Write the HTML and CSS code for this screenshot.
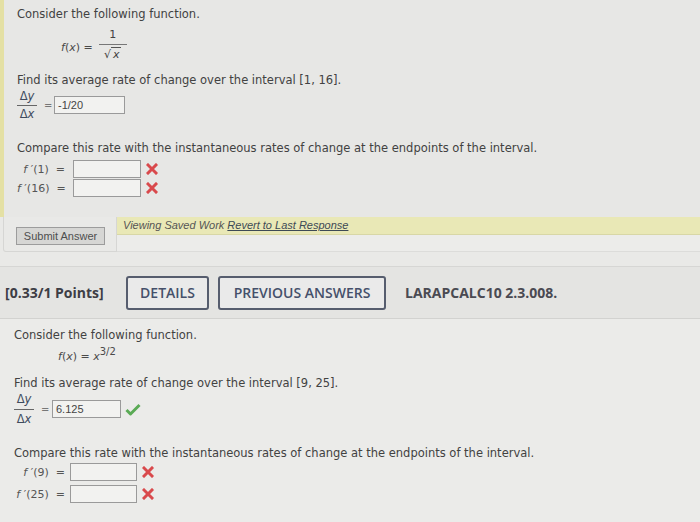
FILE: index.html
```html
<!DOCTYPE html>
<html>
<head>
<meta charset="utf-8">
<link rel="stylesheet" href="styles.css">
</head>
<body>
<div class="page">
  <section class="q1">
    <p class="txt t1">Consider the following function.</p>
    <div class="formula f1">
      <span class="fx"><i>f</i>(<i>x</i>) =</span>
      <span class="frac">
        <span class="num">1</span>
        <span class="bar"></span>
        <span class="den">√<span class="rad"><i>x</i></span></span>
      </span>
    </div>
    <p class="txt t2">Find its average rate of change over the interval [1, 16].</p>
    <div class="drow d1">
      <span class="dfrac"><span class="dn">Δ<i>y</i></span><span class="dbar"></span><span class="dd">Δ<i>x</i></span></span>
      <span class="eq">=</span>
      <span class="box filled">-1/20</span>
    </div>
    <p class="txt t3">Compare this rate with the instantaneous rates of change at the endpoints of the interval.</p>
    <div class="arow r1">
      <span class="lab"><i>f</i> ′(1) &nbsp;=</span>
      <span class="box wide"></span>
      <svg class="xm" width="12" height="12" viewBox="0 0 12 12"><path d="M2 2 L10 10 M10 2 L2 10" stroke="#d9494c" stroke-width="3" stroke-linecap="square"/></svg>
    </div>
    <div class="arow r2">
      <span class="lab"><i>f</i> ′(16) &nbsp;=</span>
      <span class="box wide"></span>
      <svg class="xm" width="12" height="12" viewBox="0 0 12 12"><path d="M2 2 L10 10 M10 2 L2 10" stroke="#d9494c" stroke-width="3" stroke-linecap="square"/></svg>
    </div>
  </section>
  <div class="submitrow">
    <div class="submitcell"><span class="submit">Submit Answer</span></div>
    <div class="savedcell">
      <div class="saved"><i>Viewing Saved Work</i> <a class="revert">Revert to Last Response</a></div>
    </div>
  </div>
  <header class="qhead">
    <span class="points">[0.33/1 Points]</span>
    <span class="btn details">DETAILS</span>
    <span class="btn prev">PREVIOUS ANSWERS</span>
    <span class="code">LARAPCALC10 2.3.008.</span>
  </header>
  <section class="q2">
    <p class="txt u1">Consider the following function.</p>
    <div class="formula f2"><span class="fx"><i>f</i>(<i>x</i>) = <i>x</i><sup>3/2</sup></span></div>
    <p class="txt u2">Find its average rate of change over the interval [9, 25].</p>
    <div class="drow d2">
      <span class="dfrac"><span class="dn">Δ<i>y</i></span><span class="dbar"></span><span class="dd">Δ<i>x</i></span></span>
      <span class="eq">=</span>
      <span class="box filled">6.125</span>
      <svg class="ck" width="16" height="13" viewBox="0 0 16 13"><path d="M1.5 7 L5.5 11 L14.5 2" fill="none" stroke="#5aaa55" stroke-width="3" stroke-linejoin="round"/></svg>
    </div>
    <p class="txt u3">Compare this rate with the instantaneous rates of change at the endpoints of the interval.</p>
    <div class="arow s1">
      <span class="lab"><i>f</i> ′(9) &nbsp;=</span>
      <span class="box wide2"></span>
      <svg class="xm" width="12" height="12" viewBox="0 0 12 12"><path d="M2 2 L10 10 M10 2 L2 10" stroke="#d9494c" stroke-width="3" stroke-linecap="square"/></svg>
    </div>
    <div class="arow s2">
      <span class="lab"><i>f</i> ′(25) &nbsp;=</span>
      <span class="box wide2"></span>
      <svg class="xm" width="12" height="12" viewBox="0 0 12 12"><path d="M2 2 L10 10 M10 2 L2 10" stroke="#d9494c" stroke-width="3" stroke-linecap="square"/></svg>
    </div>
  </section>
</div>
</body>
</html>
```
FILE: styles.css
```css
* { box-sizing: border-box; }
html, body { margin: 0; padding: 0; }
body {
  width: 700px;
  height: 522px;
  overflow: hidden;
  background: #e9e9e7;
  font-family: "DejaVu Sans", Verdana, sans-serif;
  color: #424242;
}
.page { width: 700px; height: 522px; display: flex; flex-direction: column; }

.txt { margin: 0; font-size: 11.5px; line-height: 14px; white-space: nowrap; }

.q1 {
  height: 217px;
  border-left: 4px solid #e4e0a4;
  padding: 7px 0 0 13px;
  background: #e7e7e5;
}
.q1 .t2 { margin-top: 11px; }
.q1 .t3 { margin-top: 20px; }

.formula { display: flex; align-items: center; font-size: 11px; }
.f1 { margin-top: 7px; padding-left: 44px; height: 34px; }
.fx { margin-right: 6px; padding-top: 4px; color: #4a4a4a; }
.fx sup { font-size: 10px; vertical-align: 5px; line-height: 0; }
.frac { display: flex; flex-direction: column; align-items: center; width: 28px; }
.num { line-height: 14px; }
.bar { width: 28px; height: 1px; background: #777; margin: 2px 0 3px; }
.den { line-height: 14px; }
.rad { border-top: 1px solid #555; padding: 0 2px; }

.drow { display: flex; align-items: center; font-size: 11.5px; }
.d1 { margin-top: 2px; }
.dfrac { display: flex; flex-direction: column; align-items: center; width: 20px; color: #3e4b5e; }
.dn, .dd { line-height: 14px; }
.dbar { width: 20px; height: 1px; background: #666; margin: 2px 0 1px; }
.eq { margin: 0 0 0 7px; width: 7px; font-size: 10px; color: #777; }
.box {
  display: inline-block;
  height: 18px;
  border: 1px solid #9a9a9a;
  background: #f2f2f0;
  font-family: "Liberation Sans", Arial, sans-serif;
  font-size: 11px;
  line-height: 16px;
  padding-left: 3px;
  color: #444;
}
.filled { width: 71px; margin-left: 3px; }
.wide { width: 68px; }
.wide2 { width: 67px; }

.arow { display: flex; align-items: center; font-size: 11px; height: 18px; }
.lab { width: 48px; text-align: right; white-space: nowrap; color: #555; }
.r1 { margin-top: 5px; }
.r2 { margin-top: 1px; }
.r1 .box, .r2 .box { margin-left: 8px; }
.xm { margin-left: 5px; }

.submitrow { display: flex; height: 35px; }
.submitcell {
  width: 114px;
  padding: 8px 0 0 12px;
  margin-left: 3px;
  border-left: 1px solid #d6d6d4;
  border-bottom: 1px solid #d6d6d4;
  border-right: 1px solid #d6d6d4;
  border-bottom-left-radius: 3px;
  background: #e9e9e7;
}
.submit {
  display: inline-block;
  width: 89px;
  height: 18px;
  background: #d6d6d4;
  border: 1px solid #9c9c9c;
  font-family: "Liberation Sans", Arial, sans-serif;
  font-size: 11px;
  line-height: 16px;
  text-align: center;
  color: #4e4e4e;
}
.savedcell { flex: 1; background: #ececea; border-bottom: 1px solid #dcdcda; }
.saved {
  height: 18px;
  background: #e9e8b6;
  border-bottom: 1px solid #d8d7a6;
  font-family: "Liberation Sans", Arial, sans-serif;
  font-size: 11px;
  line-height: 16px;
  padding-left: 6px;
  color: #555;
}
.revert { text-decoration: underline; font-style: italic; color: #3d4a55; }

.qhead {
  margin-top: 14px;
  height: 53px;
  display: flex;
  align-items: center;
  background: #e4e4e2;
  border-top: 1px solid #d6d6d4;
  border-bottom: 1px solid #d2d2d0;
  font-family: "Open Sans", sans-serif;
  font-size: 14px;
  color: #3d3d45;
  padding-left: 5px;
}
.points { font-weight: 700; width: 121px; }
.btn {
  height: 34px;
  border: 2px solid #565d6e;
  border-radius: 3px;
  display: flex;
  align-items: center;
  justify-content: center;
  color: #45506a;
  font-weight: 600;
  background: #eaeaea;
}
.details { width: 83px; }
.prev { width: 168px; margin-left: 9px; }
.code { font-weight: 700; margin-left: 19px; color: #4a4a52; }

.q2 {
  flex: 1;
  padding: 9px 0 0 14px;
  background: #ebebe9;
}
.f2 { margin-top: 8px; padding-left: 44px; height: 14px; line-height: 14px; }
.f2 .fx { padding-top: 0; }
.q2 .u2 { margin-top: 12px; }
.d2 { margin-top: 2px; }
.d2 .dbar { margin: 3px 0 2px; }
.d2 .filled { width: 69px; margin-left: 4px; }
.ck { margin-left: 4px; }
.q2 .u3 { margin-top: 20px; }
.s1 { margin-top: 3px; }
.s2 { margin-top: 4px; }
.s1 .box, .s2 .box { margin-left: 5px; }
.q2 .lab { width: 51px; }
```
